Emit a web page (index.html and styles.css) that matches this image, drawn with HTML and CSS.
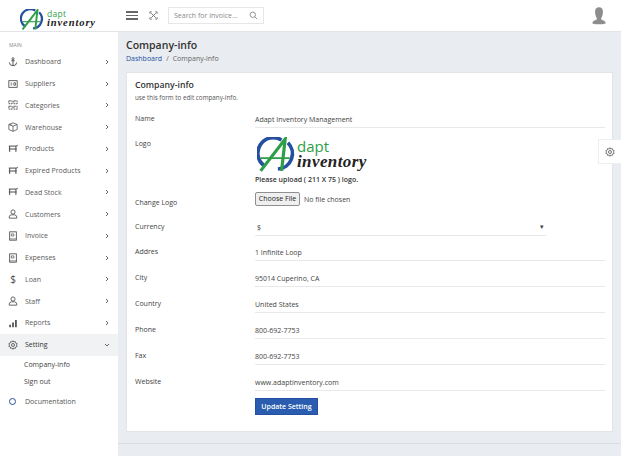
FILE: index.html
```html
<!DOCTYPE html>
<html lang="en">
<head>
<meta charset="utf-8">
<title>Company-info</title>
<link rel="stylesheet" href="styles.css">
</head>
<body>
<svg class="defs" width="0" height="0" aria-hidden="true">
  <defs>
    <symbol id="chev" viewBox="0 0 6 8"><path d="M2 2 4 4 2 6" fill="none" stroke="currentColor" stroke-width="1"/></symbol>
    <symbol id="cart" viewBox="0 0 12 12"><path d="M1 2.500h9.500M2 2.500v7M9.500 2.500v7M1 6h9.500M10.500 2.500 11.500 1" fill="none" stroke="currentColor" stroke-width="1.200"/></symbol>
    <symbol id="user" viewBox="0 0 12 12"><circle cx="6" cy="3.600" r="2.500" fill="none" stroke="currentColor"/><path d="M1.500 11v-1.500q0-2 2.500-2.500h4q2.500.5 2.500 2.500V11z" fill="none" stroke="currentColor"/></symbol>
    <symbol id="book" viewBox="0 0 12 12"><rect x="2" y="1" width="8" height="10" fill="none" stroke="currentColor"/><path d="M4 3.500h3v2.500H4z" fill="none" stroke="currentColor" stroke-width=".8"/><path d="M2 9.500h8" stroke="currentColor" stroke-width=".8"/></symbol>
    <symbol id="gear" viewBox="0 0 12 12"><circle cx="6" cy="6" r="1.800" fill="none" stroke="currentColor"/><path d="M6 .8 7 2.400 8.900 1.900 9.300 3.800 11.100 4.500 10 6 11.100 7.500 9.300 8.200 8.900 10.100 7 9.600 6 11.200 5 9.600 3.100 10.100 2.700 8.200.9 7.500 2 6 .9 4.500 2.700 3.800 3.100 1.900 5 2.400z" fill="none" stroke="currentColor" stroke-width=".9"/></symbol>
    <symbol id="mark" viewBox="0 0 44 38">
      <path d="M9 32A17 17 0 0 1 27 3" fill="none" stroke="#24509f" stroke-width="4"/>
      <path d="M34 6A17 17 0 0 1 23 35" fill="none" stroke="#24509f" stroke-width="4"/>
      <path d="M4 37 31 2 27 37" fill="none" stroke="#2e9e48" stroke-width="3.500"/>
      <path d="M4 23h32" stroke="#2e9e48" stroke-width="2"/>
    </symbol>
  </defs>
</svg>

<header class="topbar">
  <div class="brand">
    <svg class="brand-mark"><use href="#mark"/></svg>
    <div class="brand-text"><span class="brand-dapt">dapt</span><span class="brand-inv">inventory</span></div>
  </div>
  <div class="burger"><span></span><span></span><span></span></div>
  <svg class="expand" viewBox="0 0 10 10"><path d="M1 3V1h2M7 1h2v2M9 7v2H7M3 9H1V7M2.500 2.500l5 5M7.500 2.500l-5 5" fill="none" stroke="#666" stroke-width="1"/></svg>
  <div class="search">
    <span>Search for invoice...</span>
    <svg class="search-icon" viewBox="0 0 10 10"><circle cx="4.200" cy="4.200" r="3" fill="none" stroke="#888"/><path d="m6.500 6.500 2.500 2.500" stroke="#888"/></svg>
  </div>
  <svg class="avatar" viewBox="0 0 16 20"><path d="M8 0c3 0 4.500 2 4.500 5S11.500 11 10.500 12.500V14q4 1.500 5 3v1.500q-7.500 2-15 0V17q1-1.500 5-3v-1.500C4.500 11 3.500 8 3.500 5S5 0 8 0z" fill="#8d8d8d"/></svg>
</header>

<div class="shell">
  <nav class="sidebar">
    <div class="nav-title">MAIN</div>
    <a class="nav-item"><svg class="nav-icon" viewBox="0 0 12 12"><circle cx="6" cy="2" r="1.200" fill="none" stroke="currentColor"/><path d="M6 3v7.500M4 4.500h4M1.500 6.500q.5 4 4.500 4t4.500-4" fill="none" stroke="currentColor" stroke-width="1.100"/></svg><span class="nav-label">Dashboard</span><svg class="chev"><use href="#chev"/></svg></a>
    <a class="nav-item"><svg class="nav-icon" viewBox="0 0 12 12"><rect x="1" y="2" width="10" height="8" fill="none" stroke="currentColor"/><path d="M3 5h2M3 7h2M7 4.500h2v3H7z" fill="none" stroke="currentColor" stroke-width=".9"/></svg><span class="nav-label">Suppliers</span><svg class="chev"><use href="#chev"/></svg></a>
    <a class="nav-item"><svg class="nav-icon" viewBox="0 0 12 12"><path d="M1 1h4v3.500H1zM7 1h4v3.500H7zM1 7.500h4V11H1zM7 7.500h4V11H7z" fill="none" stroke="currentColor" stroke-dasharray="2.500 .7"/></svg><span class="nav-label">Categories</span><svg class="chev"><use href="#chev"/></svg></a>
    <a class="nav-item"><svg class="nav-icon" viewBox="0 0 12 12"><path d="M6 1 11 3v6l-5 2.200L1 9V3zM1 3l5 2 5-2M6 5v6.200M3.500 2v2" fill="none" stroke="currentColor" stroke-width=".9"/></svg><span class="nav-label">Warehouse</span><svg class="chev"><use href="#chev"/></svg></a>
    <a class="nav-item"><svg class="nav-icon"><use href="#cart"/></svg><span class="nav-label">Products</span><svg class="chev"><use href="#chev"/></svg></a>
    <a class="nav-item"><svg class="nav-icon"><use href="#cart"/></svg><span class="nav-label">Expired Products</span><svg class="chev"><use href="#chev"/></svg></a>
    <a class="nav-item"><svg class="nav-icon"><use href="#cart"/></svg><span class="nav-label">Dead Stock</span><svg class="chev"><use href="#chev"/></svg></a>
    <a class="nav-item"><svg class="nav-icon"><use href="#user"/></svg><span class="nav-label">Customers</span><svg class="chev"><use href="#chev"/></svg></a>
    <a class="nav-item"><svg class="nav-icon"><use href="#book"/></svg><span class="nav-label">Invoice</span><svg class="chev"><use href="#chev"/></svg></a>
    <a class="nav-item"><svg class="nav-icon"><use href="#book"/></svg><span class="nav-label">Expenses</span><svg class="chev"><use href="#chev"/></svg></a>
    <a class="nav-item"><span class="nav-icon dollar">$</span><span class="nav-label">Loan</span><svg class="chev"><use href="#chev"/></svg></a>
    <a class="nav-item"><svg class="nav-icon"><use href="#user"/></svg><span class="nav-label">Staff</span><svg class="chev"><use href="#chev"/></svg></a>
    <a class="nav-item"><svg class="nav-icon" viewBox="0 0 12 12"><path d="M1.500 11V8h2v3zM5 11V5.500h2V11zM8.500 11V2.500h2V11z" fill="currentColor"/></svg><span class="nav-label">Reports</span><svg class="chev"><use href="#chev"/></svg></a>
    <a class="nav-item active"><svg class="nav-icon"><use href="#gear"/></svg><span class="nav-label">Setting</span><svg class="chev down"><use href="#chev"/></svg></a>
    <a class="sub-item">Company-info</a>
    <a class="sub-item">Sign out</a>
    <a class="doc-item"><span class="ring"></span><span>Documentation</span></a>
  </nav>

  <main class="content">
    <h1 class="page-title">Company-info</h1>
    <div class="crumbs"><a class="crumb-link">Dashboard</a><span>/</span><span>Company-info</span></div>
    <section class="card">
      <h2 class="card-title">Company-info</h2>
      <p class="card-sub">use this form to edit company-info.</p>
      <div class="form">
        <div class="row name-row"><label>Name</label><div class="field">Adapt Inventory Management</div></div>
        <div class="row logo-row"><label>Logo</label>
          <div class="logo-block">
            <div class="logo-large">
              <svg class="logo-mark"><use href="#mark"/></svg>
              <div class="logo-words"><span class="logo-dapt">dapt</span><span class="logo-inv">inventory</span></div>
            </div>
            <div class="logo-note">Please upload ( 211 X 75 ) logo.</div>
          </div>
        </div>
        <div class="row file-row"><label>Change Logo</label><div class="file"><span class="file-btn">Choose File</span><span>No file chosen</span></div></div>
        <div class="row currency-row"><label>Currency</label><div class="field select"><span>$</span><span class="caret">▾</span></div></div>
        <div class="row"><label>Addres</label><div class="field">1 Infinite Loop</div></div>
        <div class="row"><label>City</label><div class="field">95014 Cuperino, CA</div></div>
        <div class="row"><label>Country</label><div class="field">United States</div></div>
        <div class="row"><label>Phone</label><div class="field">800-692-7753</div></div>
        <div class="row"><label>Fax</label><div class="field">800-692-7753</div></div>
        <div class="row"><label>Website</label><div class="field">www.adaptinventory.com</div></div>
        <div class="row submit-row"><span></span><div><span class="btn">Update Setting</span></div></div>
      </div>
    </section>
    <div class="footer-line"></div>
  </main>
</div>

<aside class="settings-tab"><svg class="settings-icon"><use href="#gear"/></svg></aside>
</body>
</html>
```

FILE: styles.css
```css
* { box-sizing: border-box; }
html, body { margin: 0; height: 100%; }
body {
  width: 621px;
  height: 456px;
  overflow: hidden;
  position: relative;
  background: #fff;
  color: #4a4a4a;
  font-family: "Open Sans", "Liberation Sans", sans-serif;
  font-size: 7px;
}
.defs { position: absolute; }

.topbar {
  height: 32px;
  display: flex;
  align-items: center;
  background: #fff;
  border-bottom: 1px solid #e2e4e8;
}
.brand { width: 126px; padding: 8px 0 0 20px; display: flex; align-items: center; flex: none; height: 100%; }
.brand-mark { width: 25px; height: 21px; flex: none; }
.brand-text { display: flex; flex-direction: column; margin: -2px 0 0 2px; line-height: 8px; }
.brand-dapt { color: #2e9e48; font-size: 8.500px; letter-spacing: .3px; }
.brand-inv { color: #222; font-family: "Liberation Serif", serif; font-style: italic; font-weight: bold; font-size: 10.500px; letter-spacing: .9px; margin-top: 1px; }
.burger { display: flex; flex-direction: column; gap: 2px; width: 12px; flex: none; }
.burger span { height: 1.500px; background: #666; }
.expand { width: 9px; height: 9px; margin-left: 11px; flex: none; }
.search {
  margin-left: 10px;
  width: 96px;
  height: 17px;
  border: 1px solid #e6e6e6;
  padding: 0 5px;
  display: flex;
  align-items: center;
  justify-content: space-between;
  color: #8a8a8a;
  font-size: 7px;
}
.search-icon { width: 9px; height: 9px; }
.avatar { width: 14px; height: 18px; margin-left: auto; margin-right: 15px; }

.shell { display: flex; height: 424px; }
.sidebar { width: 118px; flex: none; background: #fff; display: flex; flex-direction: column; }
.nav-title { font-size: 5px; color: #8a8a8a; padding: 9px 0 0 9px; height: 19px; line-height: 8px; }
.nav-item {
  height: 21.750px;
  display: flex;
  align-items: center;
  padding: 0 8px;
  color: #5a5a5a;
  font-size: 7px;
}
.nav-label { flex: 1; }
.nav-icon { width: 10px; height: 10px; flex: none; margin-right: 7px; color: #4a4a4a; }
.dollar { display: block; font-size: 10px; line-height: 10px; text-align: center; }
.chev { width: 6px; height: 8px; flex: none; color: #666; }
.chev.down { transform: rotate(90deg); }
.nav-item.active { background: #f1f2f4; color: #333; }
.sub-item { padding-left: 24px; height: 17px; display: flex; align-items: center; color: #444; }
.doc-item { margin-top: 3px; padding-left: 9px; display: flex; align-items: center; gap: 9px; height: 17px; color: #555; }
.ring { width: 7px; height: 7px; border-radius: 50%; border: 1.500px solid #24509f; }

.content { flex: 1; background: #e9ecf0; padding: 6px 8px 0; min-width: 0; }
.page-title { margin: 0; font-size: 10.500px; line-height: 14px; font-weight: 600; color: #333; }
.crumbs { display: flex; gap: 4px; margin-top: 1px; line-height: 11px; font-size: 7px; color: #666; }
.crumb-link { color: #24509f; }
.card { margin-top: 8px; height: 360px; background: #fff; border: 1px solid #e2e4e8; padding: 6px 8px 0; }
.card-title { margin: 0; font-size: 8.700px; line-height: 12px; font-weight: 600; color: #333; }
.card-sub { margin: 2px 0 0; font-size: 6.300px; line-height: 9px; color: #555; }
.form { margin-top: 11px; display: flex; flex-direction: column; }
.row { display: grid; grid-template-columns: 120px 350px; height: 26px; }
.row label { font-size: 7px; line-height: 11px; color: #444; }
.field { height: 15px; border-bottom: 1px solid #e9e9e9; color: #444; font-size: 7px; line-height: 11px; padding-top: 1px; }
.name-row { height: 25px; }
.logo-row { height: 59px; }
.logo-block { display: flex; flex-direction: column; }
.logo-large { display: flex; align-items: center; height: 38px; margin-top: -3px; }
.logo-mark { width: 40px; height: 35px; flex: none; margin-left: 2px; }
.logo-words { display: flex; flex-direction: column; margin-left: -1px; }
.logo-dapt { color: #2e9e48; font-size: 15px; margin-left: 1px; height: 14px; line-height: 12px; }
.logo-inv { color: #222; font-family: "Liberation Serif", serif; font-style: italic; font-weight: bold; font-size: 17px; line-height: 13px; letter-spacing: .4px; margin: 1px 0 0 1px; }
.logo-note { font-size: 7px; font-weight: 600; color: #333; line-height: 10px; margin-top: 2px; }
.file-row { height: 24px; }
.file { display: flex; align-items: center; gap: 4px; height: 14px; margin-top: -5px; font-size: 7px; color: #444; }
.file-btn { border: 1px solid #8f8f8f; border-radius: 2px; background: #efefef; color: #222; height: 14px; line-height: 12px; font-size: 7px; width: 45px; text-align: center; white-space: nowrap; }
.currency-row { height: 25px; }
.select { width: 291px; display: flex; justify-content: space-between; padding-left: 2px; padding-right: 2px; }
.caret { font-size: 7px; line-height: 10px; }
.submit-row { height: 20px; margin-top: -4px; }
.btn { display: inline-block; width: 63px; height: 17px; background: #2a5db0; border: 1px solid #24509f; color: #fff; font-size: 7px; font-weight: 600; line-height: 15px; text-align: center; }
.footer-line { margin: 11px -8px 0; border-top: 1px solid #d9dce0; }

.settings-tab {
  position: absolute;
  right: 0;
  top: 139px;
  width: 23px;
  height: 25px;
  background: #fff;
  border: 1px solid #eceef1;
  border-right: 0;
  display: flex;
  align-items: center;
  justify-content: center;
}
.settings-icon { width: 10px; height: 10px; color: #555; }
```
